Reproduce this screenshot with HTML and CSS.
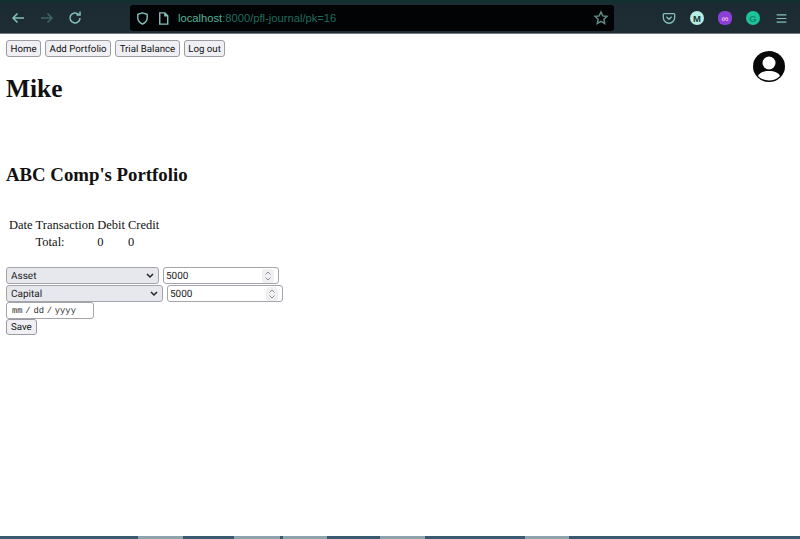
FILE: index.html
```html
<!DOCTYPE html>
<html lang="en">
<head>
<meta charset="utf-8">
<title>ABC Comp's Portfolio</title>
<link rel="stylesheet" href="styles.css">
</head>
<body>
<header class="browser">
  <nav class="nav-icons">
    <svg class="icon" viewBox="0 0 16 16"><path d="M14 8H3M7.500 3.500 3 8l4.500 4.500" class="stroke-active"/></svg>
    <svg class="icon" viewBox="0 0 16 16"><path d="M2 8h11M8.500 3.500 13 8l-4.500 4.500" class="stroke-dim"/></svg>
    <svg class="icon" viewBox="0 0 16 16"><path d="M13 8a5 5 0 1 1-1.500-3.600M13 1.500v3.500H9.500" class="stroke-active"/></svg>
  </nav>
  <div class="urlbar">
    <svg class="url-icon" viewBox="0 0 16 16"><path d="M8 2 3 3.500v4c0 3 2.200 5.200 5 6.500 2.800-1.300 5-3.500 5-6.500v-4z" class="stroke-active"/></svg>
    <svg class="url-icon" viewBox="0 0 16 16"><path d="M4 2h5.500L12.500 5v9H4zM9.500 2v3h3" class="stroke-active"/></svg>
    <span class="url"><span class="url-host">localhost</span>:8000/pfl-journal/pk=16</span>
    <svg class="url-star" viewBox="0 0 16 16"><path d="m8 2 1.800 3.900 4.200.5-3.100 2.900.8 4.200L8 11.400l-3.700 2.100.8-4.200L2 6.400l4.200-.5z" class="stroke-star"/></svg>
  </div>
  <div class="extensions">
    <svg class="ext-pocket" viewBox="0 0 16 16"><path d="M2.500 3h11c.6 0 1 .4 1 1v3.500a6.500 6.500 0 0 1-13 0V4c0-.6.400-1 1-1zM5 6.500l3 3 3-3" class="stroke-active"/></svg>
    <span class="ext ext-m">M</span>
    <span class="ext ext-purple">∞</span>
    <span class="ext ext-g">G</span>
    <svg class="ext-menu" viewBox="0 0 16 16"><path d="M2 3.500h12M2 8h12M2 12.500h12" class="stroke-active"/></svg>
  </div>
</header>

<main class="page">
  <svg class="avatar" viewBox="0 0 32 31">
    <ellipse cx="16" cy="15.500" rx="16" ry="15.500" fill="#080808"/>
    <circle cx="16" cy="12" r="6.500" fill="#fff"/>
    <path d="M5 25c1.500-3.500 5.500-5 11-5s9.500 1.500 11 5c-3 3-7 4.500-11 4.500S8 28 5 25z" fill="#fff"/>
  </svg>
  <div class="actions">
    <button class="btn">Home</button>
    <button class="btn">Add Portfolio</button>
    <button class="btn">Trial Balance</button>
    <button class="btn">Log out</button>
  </div>
  <h1 class="user">Mike</h1>
  <h2 class="portfolio">ABC Comp's Portfolio</h2>
  <table class="journal">
    <thead>
      <tr><th>Date</th><th>Transaction</th><th>Debit</th><th>Credit</th></tr>
    </thead>
    <tbody>
      <tr><td></td><td class="total">Total:</td><td>0</td><td>0</td></tr>
    </tbody>
  </table>
  <form class="entry">
    <div class="line">
      <select class="field select-asset"><option>Asset</option></select>
      <input class="field amount" type="number" value="5000">
    </div>
    <div class="line">
      <select class="field select-capital"><option>Capital</option></select>
      <input class="field amount" type="number" value="5000">
    </div>
    <div class="line"><input class="field date" type="text" placeholder="mm / dd / yyyy"></div>
    <div class="line"><button class="btn btn-save" type="button">Save</button></div>
  </form>
</main>

<footer class="taskbar">
  <span class="task task-1"></span>
  <span class="task task-2"></span>
  <span class="task task-3"></span>
  <span class="task task-4"></span>
  <span class="task task-5"></span>
</footer>
</body>
</html>
```

FILE: styles.css
```css
* { box-sizing: border-box; }
html, body { height: 100%; }
body {
  margin: 0;
  display: flex;
  flex-direction: column;
  height: 539px;
  overflow: hidden;
  background: #fff;
  color: #111;
  font-family: "Liberation Serif", serif;
}

.browser {
  flex: none;
  height: 34px;
  display: flex;
  align-items: center;
  padding: 3px 0 0 10px;
  background: linear-gradient(#12302f 0, #12302f 2px, #1c2b33 4px, #1e2d33 100%);
  border-bottom: 1px solid #6f7c7f;
}
.nav-icons { display: flex; align-items: center; gap: 12.500px; width: 120px; }
.icon { width: 16px; height: 16px; }
.stroke-active { fill: none; stroke: #84bfba; stroke-width: 1.500; }
.stroke-dim { fill: none; stroke: #3f6468; stroke-width: 1.500; }
.stroke-star { fill: none; stroke: #5f8a80; stroke-width: 1.500; }
.urlbar {
  width: 484px;
  height: 26px;
  display: flex;
  align-items: center;
  padding: 0 5px;
  gap: 6px;
  background: #020304;
  border-radius: 3px;
}
.url-icon { width: 15px; height: 15px; }
.url { flex: 1; margin-left: 1px; font: 11.2px "Liberation Sans", sans-serif; color: #1f6b5c; }
.url-host { color: #4fb59c; }
.url-star { width: 16px; height: 16px; }
.extensions { flex: 1; display: flex; align-items: center; padding-left: 48px; gap: 14px; }
.ext-pocket { width: 14px; height: 14px; }
.ext {
  width: 14px;
  height: 14px;
  border-radius: 50%;
  display: flex;
  align-items: center;
  justify-content: center;
  font: bold 9.5px "Liberation Sans", sans-serif;
}
.ext-m { background: #b6ece4; color: #14363a; }
.ext-purple { background: #8b3fd6; color: #eeb0e8; border-radius: 6px; }
.ext-g { background: #1cc49b; color: #0e8a6e; }
.ext-menu { width: 13px; height: 13px; margin-left: 1px; }

.page { flex: 1; position: relative; padding: 6px 6px 0; min-height: 0; }
.avatar { position: absolute; top: 17px; right: 15px; width: 32px; height: 31px; }
.actions { display: flex; gap: 4px; }
.btn {
  height: 17px;
  padding: 1px 3.500px 0;
  font: 9.7px Roboto, sans-serif;
  text-rendering: geometricPrecision;
  color: #111;
  background: #f0f0f4;
  border: 1px solid #9b9ba2;
  border-radius: 3px;
}
.btn-save { height: 16px; padding: 0 4px; }
.user { margin: 17px 0 0; font-size: 25.4px; line-height: 29px; font-weight: bold; }
.portfolio { margin: 61px 0 0; font-size: 18.8px; line-height: 22px; font-weight: bold; }
.journal {
  margin: 29px 0 0;
  border-spacing: 3px;
  font-size: 12.5px;
  line-height: 14px;
}
.journal th { font-weight: normal; padding: 0; text-align: left; }
.journal td { padding: 0; }

.entry { margin-top: 15px; }
.line { display: flex; gap: 4px; height: 17px; }
.line:first-child { height: 18px; }
.field {
  height: 17px;
  font: 10px Roboto, sans-serif;
  text-rendering: geometricPrecision;
  color: #222;
  border: 1px solid #a4a4aa;
  border-radius: 3px;
  padding: 1px 3px 0;
  background-color: #fff;
}
select.field {
  appearance: none;
  padding: 1px 4px 0;
  background-color: #e7e7ee;
  background-image: url("data:image/svg+xml,%3Csvg xmlns='http://www.w3.org/2000/svg' width='8' height='6'%3E%3Cpath d='M1 1l3 3 3-3' fill='none' stroke='%23222' stroke-width='1.500'/%3E%3C/svg%3E");
  background-repeat: no-repeat;
  background-position: right 4px center;
}
.select-asset { width: 153px; }
.select-capital { width: 157px; }
.amount {
  width: 116px;
  appearance: textfield;
  padding: 1px 2px 0;
  background-image: url("data:image/svg+xml,%3Csvg xmlns='http://www.w3.org/2000/svg' width='12' height='14'%3E%3Crect width='12' height='14' rx='3' fill='%23f0f0f3'/%3E%3Cpath d='M3.500 5.500 6 3l2.500 2.500M3.500 8.500 6 11l2.500-2.500' fill='none' stroke='%23909098'/%3E%3C/svg%3E");
  background-repeat: no-repeat;
  background-position: right 4px center;
}
.amount::-webkit-inner-spin-button { appearance: none; }
.date {
  width: 88px;
  padding: 1px 5px 0;
  font: 8.8px "Liberation Mono", monospace;
  word-spacing: -2.500px;
}
.date::placeholder { color: #333; opacity: 1; }

.taskbar {
  flex: none;
  height: 3px;
  display: flex;
  background: #3a5a70;
}
.task { height: 3px; background: #8fa3ad; }
.task-1 { width: 45px; margin-left: 138px; }
.task-2 { width: 46px; margin-left: 51px; }
.task-3 { width: 44px; margin-left: 3px; }
.task-4 { width: 45px; margin-left: 53px; }
.task-5 { width: 44px; margin-left: 100px; }
```
